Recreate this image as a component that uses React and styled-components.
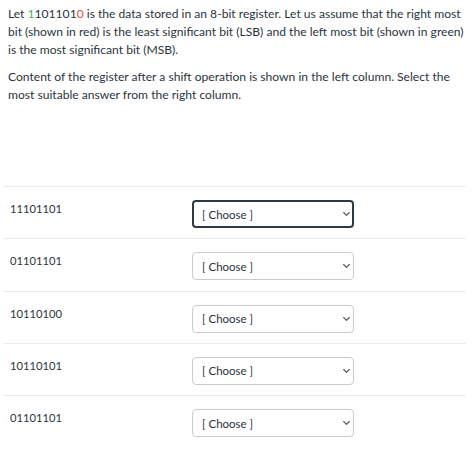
import styled, { createGlobalStyle } from "styled-components";

const GlobalStyle = createGlobalStyle`
  html, body {
    margin: 0;
    padding: 0;
    background: #ffffff;
  }
  body {
    font-family: Lato, "Open Sans", sans-serif;
    color: #2d3b45;
  }
`;

const answers = [
  { value: "11101101", focused: true },
  { value: "01101101" },
  { value: "10110100" },
  { value: "10110101" },
  { value: "01101101" },
];

function Chevron() {
  return (
    <svg width="7" height="5" viewBox="0 0 7 5" fill="none">
      <path
        d="M0.7 1 L3.5 3.8 L6.3 1"
        stroke="#4a555e"
        strokeWidth="1.1"
        strokeLinecap="round"
        strokeLinejoin="round"
      />
    </svg>
  );
}

export default function App() {
  return (
    <>
      <GlobalStyle />
      <Page>
        <Question>
          <Text>
            Let <Green>1</Green>101101<Red>0</Red> is the data stored in an
            8-bit register. Let us assume that the right most bit (shown in
            red) is the least significant bit (LSB) and the left most bit
            (shown in green) is the most significant bit (MSB).
          </Text>
          <Text>
            Content of the register after a shift operation is shown in the
            left column. Select the most suitable answer from the right column.
          </Text>
        </Question>

        <Matches>
          {answers.map((a, i) => (
            <Row key={i}>
              <Label>{a.value}</Label>
              <SelectWrap>
                <Select $focused={a.focused} defaultValue="">
                  <option value="">[ Choose ]</option>
                  <option value="lsl">Logical shift left</option>
                  <option value="lsr">Logical shift right</option>
                  <option value="asr">Arithmetic shift right</option>
                  <option value="rol">Rotate left</option>
                  <option value="ror">Rotate right</option>
                </Select>
                <Arrow>
                  <Chevron />
                </Arrow>
              </SelectWrap>
            </Row>
          ))}
        </Matches>
      </Page>
    </>
  );
}

const Page = styled.div`
  width: 474px;
  height: 450px;
  overflow: hidden;
`;

const Question = styled.div`
  padding: 5px 3px 0 8px;
`;

const Text = styled.p`
  font-size: 12.1px;
  line-height: 18px;
  margin: 0 0 9px 0;
  color: #2a343c;
`;

const Green = styled.span`
  color: #4caf50;
`;

const Red = styled.span`
  color: #e0473a;
`;

const Matches = styled.div`
  margin: 82px 8px 0 3px;
`;

const Row = styled.div`
  display: flex;
  align-items: flex-start;
  height: 52.3px;
  border-top: 1px solid #e9ebec;
  box-sizing: border-box;
`;

const Label = styled.div`
  width: 189px;
  padding: 15px 0 0 7px;
  font-size: 11.2px;
  line-height: 14px;
  color: #2a343c;
  box-sizing: border-box;
`;

const SelectWrap = styled.div`
  position: relative;
  margin-top: 13px;
  width: 162px;
  height: 28px;
`;

const Select = styled.select`
  appearance: none;
  width: 100%;
  height: 100%;
  box-sizing: border-box;
  padding: 0 20px 0 ${(p) => (p.$focused ? "8px" : "9px")};
  font-family: Lato, "Open Sans", sans-serif;
  font-size: 11.5px;
  color: #2a343c;
  background: #ffffff;
  border: ${(p) => (p.$focused ? "2px solid #2d3b45" : "1px solid #c7cdd1")};
  border-radius: 4px;
  outline: none;
`;

const Arrow = styled.span`
  position: absolute;
  right: 4px;
  top: 50%;
  transform: translateY(-50%);
  display: flex;
  pointer-events: none;
`;
